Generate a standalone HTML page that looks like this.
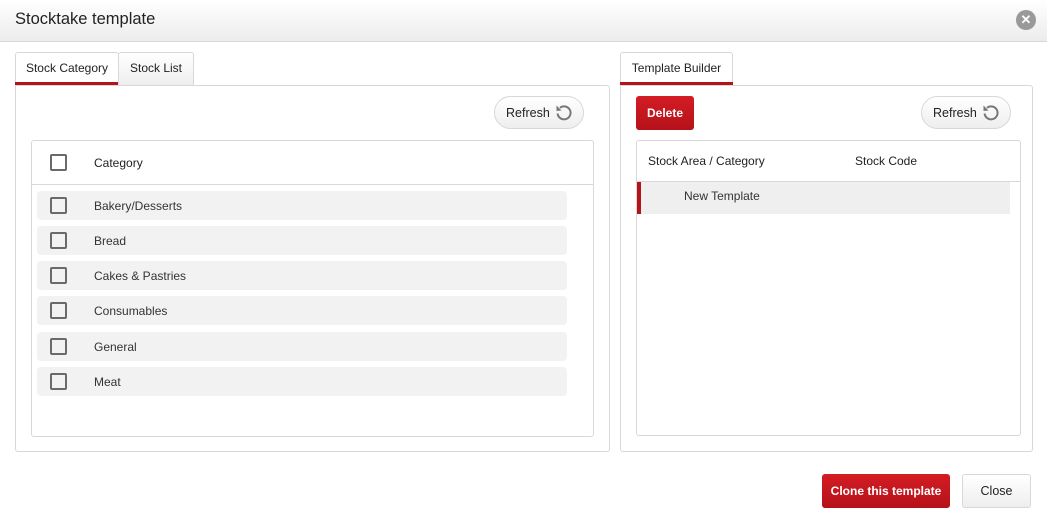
<!DOCTYPE html><html><head><style>
*{box-sizing:border-box}body{margin:0;width:1047px;height:524px;background:#fff;font-family:"Liberation Sans",sans-serif;color:#222;position:relative;overflow:hidden}
.hdr{position:absolute;left:0;top:0;width:1047px;height:42px;background:linear-gradient(#fff,#ececec);border-bottom:1px solid #d8d8d8}
.hdr span{position:absolute;left:15px;top:10px;font-size:16.5px;color:#222}
.x{position:absolute;left:1016px;top:10px;width:20px;height:20px;border-radius:50%;background:#999;color:#fff;font-size:13px;font-weight:bold;text-align:center;line-height:20px}
.a{position:absolute}
.tab{position:absolute;height:33px;font-size:12px;text-align:center;line-height:31px;border:1px solid #d8d8d8;border-bottom:none;border-radius:3px 3px 0 0}
.panel{position:absolute;border:1px solid #d8d8d8;border-radius:3px;background:#fff}
.rbtn{position:absolute;width:90px;height:33px;border:1px solid #d8d8d8;border-radius:17px;background:linear-gradient(#fff,#eee);font-size:12.5px;line-height:32px;padding-left:11px}
.rbtn svg{position:absolute;right:10px;top:7px}
.cb{position:absolute;width:17px;height:17px;border:2px solid #6a6a6a;border-radius:2px}
.row{position:absolute;left:37px;width:530px;height:29px;background:#f2f2f2;border-radius:4px;font-size:12px;color:#333}
.row span{position:absolute;left:57px;top:8px}
.row .cb{left:13px;top:6px}
.red{position:absolute;background:linear-gradient(#d41c24,#b5121a);color:#fff;font-weight:bold;font-size:12px;text-align:center;border-radius:3px}
</style></head><body>
<div class="hdr"><span>Stocktake template</span><div class="x">✕</div></div>

<div class="tab" style="left:15px;top:52px;width:104px;background:#fff">Stock Category</div>
<div class="a" style="left:15px;top:82px;width:103px;height:3px;background:#b5121a;z-index:2"></div>
<div class="tab" style="left:118px;top:52px;width:76px;background:linear-gradient(#fff,#eee)">Stock List</div>
<div class="panel" style="left:15px;top:85px;width:595px;height:367px;border-top-left-radius:0"></div>
<div class="rbtn" style="left:494px;top:96px">Refresh<svg width="18" height="18" viewBox="0 0 18 18"><path d="M5 3.8A6.5 6.5 0 1 1 2.6 9.5" fill="none" stroke="#777" stroke-width="2"/><path d="M1.5 1.5L1.5 7 6.5 6.5Z" fill="#777"/></svg></div>
<div class="panel" style="left:31px;top:140px;width:563px;height:297px"></div>
<div class="a" style="left:32px;top:184px;width:561px;height:1px;background:#d8d8d8"></div>
<div class="cb" style="left:50px;top:154px"></div>
<div class="a" style="left:94px;top:156px;font-size:12px">Category</div>
<div class="row" style="top:191px"><div class="cb"></div><span>Bakery/Desserts</span></div>
<div class="row" style="top:226px"><div class="cb"></div><span>Bread</span></div>
<div class="row" style="top:261px"><div class="cb"></div><span>Cakes &amp; Pastries</span></div>
<div class="row" style="top:296px"><div class="cb"></div><span>Consumables</span></div>
<div class="row" style="top:332px"><div class="cb"></div><span>General</span></div>
<div class="row" style="top:367px"><div class="cb"></div><span>Meat</span></div>

<div class="tab" style="left:620px;top:52px;width:113px;background:#fff">Template Builder</div>
<div class="a" style="left:620px;top:82px;width:113px;height:3px;background:#b5121a;z-index:2"></div>
<div class="panel" style="left:620px;top:85px;width:413px;height:367px;border-top-left-radius:0"></div>
<div class="red" style="left:636px;top:96px;width:58px;height:34px;line-height:34px">Delete</div>
<div class="rbtn" style="left:921px;top:96px">Refresh<svg width="18" height="18" viewBox="0 0 18 18"><path d="M5 3.8A6.5 6.5 0 1 1 2.6 9.5" fill="none" stroke="#777" stroke-width="2"/><path d="M1.5 1.5L1.5 7 6.5 6.5Z" fill="#777"/></svg></div>
<div class="panel" style="left:636px;top:140px;width:385px;height:296px"></div>
<div class="a" style="left:637px;top:181px;width:383px;height:1px;background:#d8d8d8"></div>
<div class="a" style="left:648px;top:154px;font-size:12px">Stock Area / Category</div>
<div class="a" style="left:855px;top:154px;font-size:12px">Stock Code</div>
<div class="a" style="left:637px;top:182px;width:373px;height:32px;background:#efefef;border-left:4px solid #b5121a"></div>
<div class="a" style="left:684px;top:189px;font-size:12px;color:#333">New Template</div>

<div class="red" style="left:822px;top:474px;width:128px;height:34px;line-height:34px">Clone this template</div>
<div class="a" style="left:962px;top:474px;width:69px;height:34px;border:1px solid #d8d8d8;border-radius:3px;background:linear-gradient(#fff,#eee);font-size:12.5px;text-align:center;line-height:32px">Close</div>
</body></html>
